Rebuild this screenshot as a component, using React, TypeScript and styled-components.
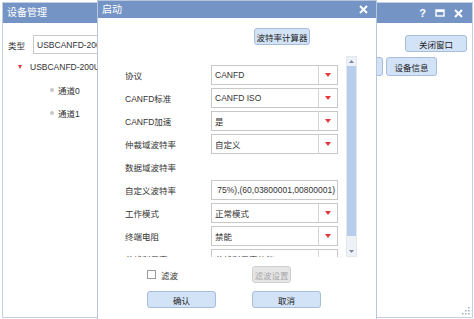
import styled, { createGlobalStyle } from "styled-components";

const GlobalStyle = createGlobalStyle`
  html, body {
    margin: 0;
    padding: 0;
    background: #ffffff;
  }
  body {
    font-family: "Liberation Sans", "Noto Sans CJK SC", sans-serif;
    font-size: 8.5px;
    color: #333;
  }
`;

type Field = {
  label: string;
  value?: string;
  kind: "select" | "input" | "none";
};

const fields: Field[] = [
  { label: "协议", value: "CANFD", kind: "select" },
  { label: "CANFD标准", value: "CANFD ISO", kind: "select" },
  { label: "CANFD加速", value: "是", kind: "select" },
  { label: "仲裁域波特率", value: "自定义", kind: "select" },
  { label: "数据域波特率", kind: "none" },
  { label: "自定义波特率", value: "75%),(60,03800001,00800001)", kind: "input" },
  { label: "工作模式", value: "正常模式", kind: "select" },
  { label: "终端电阻", value: "禁能", kind: "select" },
  { label: "总线利用率", value: "总线利用率使能", kind: "select" },
];

export default function App() {
  return (
    <>
      <GlobalStyle />
      <Desktop>
        <MainWindow>
          <TitleBar>
            <TitleText>设备管理</TitleText>
            <TitleControls>
              <HelpMark>?</HelpMark>
              <RestoreIcon />
              <CloseIcon />
            </TitleControls>
          </TitleBar>
          <MainBody>
            <LeftPane>
              <TypeRow>
                <span>类型</span>
                <TypeInput>USBCANFD-200U</TypeInput>
              </TypeRow>
              <TreeRoot>
                <TreeArrow />
                <span>USBCANFD-200U</span>
              </TreeRoot>
              <TreeChild>
                <TreeDot />
                <span>通道0</span>
              </TreeChild>
              <TreeChild>
                <TreeDot />
                <span>通道1</span>
              </TreeChild>
            </LeftPane>
            <RightPane>
              <BlueButton $w={62} $h={17}>
                关闭窗口
              </BlueButton>
              <ButtonRow>
                <BlueButton $w={60} $h={19}>
                  启动
                </BlueButton>
                <BlueButton $w={51} $h={19}>
                  设备信息
                </BlueButton>
              </ButtonRow>
            </RightPane>
          </MainBody>
          <Grip>
            <svg width="8" height="8" viewBox="0 0 8 8">
              <rect x="6" y="0" width="1.5" height="1.5" fill="#9fb0c8" />
              <rect x="3" y="3" width="1.5" height="1.5" fill="#9fb0c8" />
              <rect x="6" y="3" width="1.5" height="1.5" fill="#9fb0c8" />
              <rect x="0" y="6" width="1.5" height="1.5" fill="#9fb0c8" />
              <rect x="3" y="6" width="1.5" height="1.5" fill="#9fb0c8" />
              <rect x="6" y="6" width="1.5" height="1.5" fill="#9fb0c8" />
            </svg>
          </Grip>
        </MainWindow>

        <Dialog>
          <DialogTitle>
            <TitleText>启动</TitleText>
            <CloseIcon />
          </DialogTitle>
          <CalcRow>
            <BlueButton $w={56} $h={17}>
              波特率计算器
            </BlueButton>
          </CalcRow>
          <ScrollArea>
            <FormList>
              {fields.map((f) => (
                <FormRow key={f.label}>
                  <Label>{f.label}</Label>
                  {f.kind === "select" && (
                    <SelectBox>
                      <SelectValue>{f.value}</SelectValue>
                      <SelectArrow>
                        <svg width="6" height="4" viewBox="0 0 6 4">
                          <path d="M0 0 L6 0 L3 4 Z" fill="#e0393e" />
                        </svg>
                      </SelectArrow>
                    </SelectBox>
                  )}
                  {f.kind === "input" && (
                    <TextBox>
                      <InputValue>{f.value}</InputValue>
                    </TextBox>
                  )}
                </FormRow>
              ))}
            </FormList>
            <ScrollBar>
              <ScrollBtn>
                <svg width="5" height="3" viewBox="0 0 5 3">
                  <path d="M0 3 L5 3 L2.5 0 Z" fill="#7a8aa0" />
                </svg>
              </ScrollBtn>
              <Thumb />
              <Track />
              <ScrollBtn>
                <svg width="5" height="3" viewBox="0 0 5 3">
                  <path d="M0 0 L5 0 L2.5 3 Z" fill="#7a8aa0" />
                </svg>
              </ScrollBtn>
            </ScrollBar>
          </ScrollArea>
          <FilterRow>
            <CheckLabel>
              <CheckBox />
              <span>滤波</span>
            </CheckLabel>
            <GrayButton>滤波设置</GrayButton>
          </FilterRow>
          <ActionRow>
            <BlueButton $w={69} $h={17}>
              确认
            </BlueButton>
            <BlueButton $w={69} $h={17}>
              取消
            </BlueButton>
          </ActionRow>
        </Dialog>
      </Desktop>
    </>
  );
}

function CloseIcon() {
  return (
    <svg width="9" height="9" viewBox="0 0 9 9">
      <path d="M1 1 L8 8 M8 1 L1 8" stroke="#ffffff" strokeWidth="2" />
    </svg>
  );
}

function RestoreIcon() {
  return (
    <svg width="10" height="8" viewBox="0 0 10 8">
      <rect x="1" y="1" width="8" height="6" fill="none" stroke="#ffffff" strokeWidth="1.4" />
      <rect x="1" y="1" width="8" height="2" fill="#ffffff" />
    </svg>
  );
}

const Desktop = styled.div`
  position: relative;
  width: 474px;
  height: 319px;
  overflow: hidden;
  background: #ffffff;
`;

const MainWindow = styled.div`
  position: absolute;
  left: 2px;
  top: 2px;
  width: 469px;
  height: 314px;
  border: 1px solid #c3d0e4;
  background: #ffffff;
  display: flex;
  flex-direction: column;
`;

const TitleBar = styled.div`
  height: 20px;
  flex: none;
  background: #7594c6;
  display: flex;
  align-items: center;
  justify-content: space-between;
  padding: 0 9px 0 4px;
`;

const TitleText = styled.span`
  color: #ffffff;
  font-size: 10px;
  line-height: 1;
`;

const TitleControls = styled.div`
  display: flex;
  align-items: center;
  gap: 9px;
`;

const HelpMark = styled.span`
  color: #ffffff;
  font-weight: bold;
  font-size: 11px;
  line-height: 1;
`;

const MainBody = styled.div`
  flex: 1;
  display: flex;
  justify-content: space-between;
`;

const LeftPane = styled.div`
  display: flex;
  flex-direction: column;
  padding: 12px 0 0 5px;
`;

const TypeRow = styled.div`
  display: flex;
  align-items: center;
  gap: 8px;
  height: 19px;
`;

const TypeInput = styled.div`
  width: 200px;
  height: 17px;
  border: 1px solid #c9c9c9;
  display: flex;
  align-items: center;
  padding-left: 3px;
`;

const TreeRoot = styled.div`
  display: flex;
  align-items: center;
  gap: 8px;
  height: 23px;
  margin-top: 1px;
  padding-left: 10px;
`;

const TreeArrow = styled.span`
  width: 0;
  height: 0;
  border-left: 2.5px solid transparent;
  border-right: 2.5px solid transparent;
  border-top: 4px solid #e0393e;
`;

const TreeChild = styled.div`
  display: flex;
  align-items: center;
  gap: 4px;
  height: 23px;
  padding-left: 42px;
`;

const TreeDot = styled.span`
  width: 4px;
  height: 4px;
  border-radius: 50%;
  background: #c8c8c8;
`;

const RightPane = styled.div`
  display: flex;
  flex-direction: column;
  align-items: flex-end;
  gap: 5px;
  padding: 12px 5px 0 0;
`;

const ButtonRow = styled.div`
  display: flex;
  gap: 3px;
  margin-right: 30px;
`;

const BlueButton = styled.div<{ $w: number; $h: number }>`
  width: ${(p) => p.$w}px;
  height: ${(p) => p.$h}px;
  box-sizing: border-box;
  background: #d3e3f7;
  border: 1px solid #a7bddb;
  border-radius: 3px;
  display: flex;
  align-items: center;
  justify-content: center;
  font-size: 8.5px;
  color: #222;
  white-space: nowrap;
`;

const Grip = styled.div`
  position: absolute;
  right: 2px;
  bottom: 2px;
  line-height: 0;
`;

const Dialog = styled.div`
  position: absolute;
  left: 97px;
  top: 0;
  width: 278px;
  height: 330px;
  border: 1px solid #b7c6dc;
  background: #ffffff;
  display: flex;
  flex-direction: column;
`;

const DialogTitle = styled.div`
  height: 17px;
  flex: none;
  background: #7594c6;
  display: flex;
  align-items: center;
  justify-content: space-between;
  padding: 0 8px 0 4px;
`;

const CalcRow = styled.div`
  display: flex;
  padding: 10px 0 0 156px;
  height: 17px;
`;

const ScrollArea = styled.div`
  margin-top: 11px;
  height: 201px;
  display: flex;
  overflow: hidden;
`;

const FormList = styled.div`
  width: 247px;
  display: flex;
  flex-direction: column;
  gap: 3px;
  padding: 9px 0 0 27px;
  box-sizing: border-box;
`;

const FormRow = styled.div`
  display: flex;
  align-items: center;
  height: 20px;
  flex: none;
`;

const Label = styled.span`
  width: 86px;
  flex: none;
`;

const SelectBox = styled.div`
  width: 127px;
  height: 20px;
  box-sizing: border-box;
  border: 1px solid #c8c8c8;
  display: flex;
`;

const TextBox = styled(SelectBox)`
  overflow: hidden;
  justify-content: flex-end;
`;

const SelectValue = styled.span`
  flex: 1;
  display: flex;
  align-items: center;
  padding-left: 3px;
  white-space: nowrap;
  overflow: hidden;
`;

const InputValue = styled.span`
  flex: none;
  display: flex;
  align-items: center;
  padding-right: 2px;
  white-space: nowrap;
`;

const SelectArrow = styled.span`
  width: 18px;
  border-left: 1px solid #d5d5d5;
  display: flex;
  align-items: center;
  justify-content: center;
`;

const ScrollBar = styled.div`
  margin-left: 1px;
  width: 11px;
  height: 201px;
  box-sizing: border-box;
  border: 1px solid #e3e8ef;
  background: #eef1f5;
  display: flex;
  flex-direction: column;
`;

const ScrollBtn = styled.div`
  height: 9px;
  display: flex;
  align-items: center;
  justify-content: center;
`;

const Thumb = styled.div`
  height: 170px;
  background: #b6cdeb;
`;

const Track = styled.div`
  flex: 1;
`;

const FilterRow = styled.div`
  display: flex;
  align-items: center;
  padding: 9px 0 0 49px;
  height: 17px;
`;

const CheckLabel = styled.label`
  display: flex;
  align-items: center;
  gap: 5px;
  width: 105px;
`;

const CheckBox = styled.span`
  width: 7px;
  height: 7px;
  border: 1px solid #9a9a9a;
  background: #fff;
`;

const GrayButton = styled.div`
  width: 39px;
  height: 17px;
  box-sizing: border-box;
  border: 1px solid #cfcfcf;
  border-radius: 3px;
  background: #e6e6e6;
  color: #a8a8a8;
  font-size: 8.5px;
  display: flex;
  align-items: center;
  justify-content: center;
  white-space: nowrap;
`;

const ActionRow = styled.div`
  display: flex;
  gap: 36px;
  padding: 8px 0 0 49px;
`;
